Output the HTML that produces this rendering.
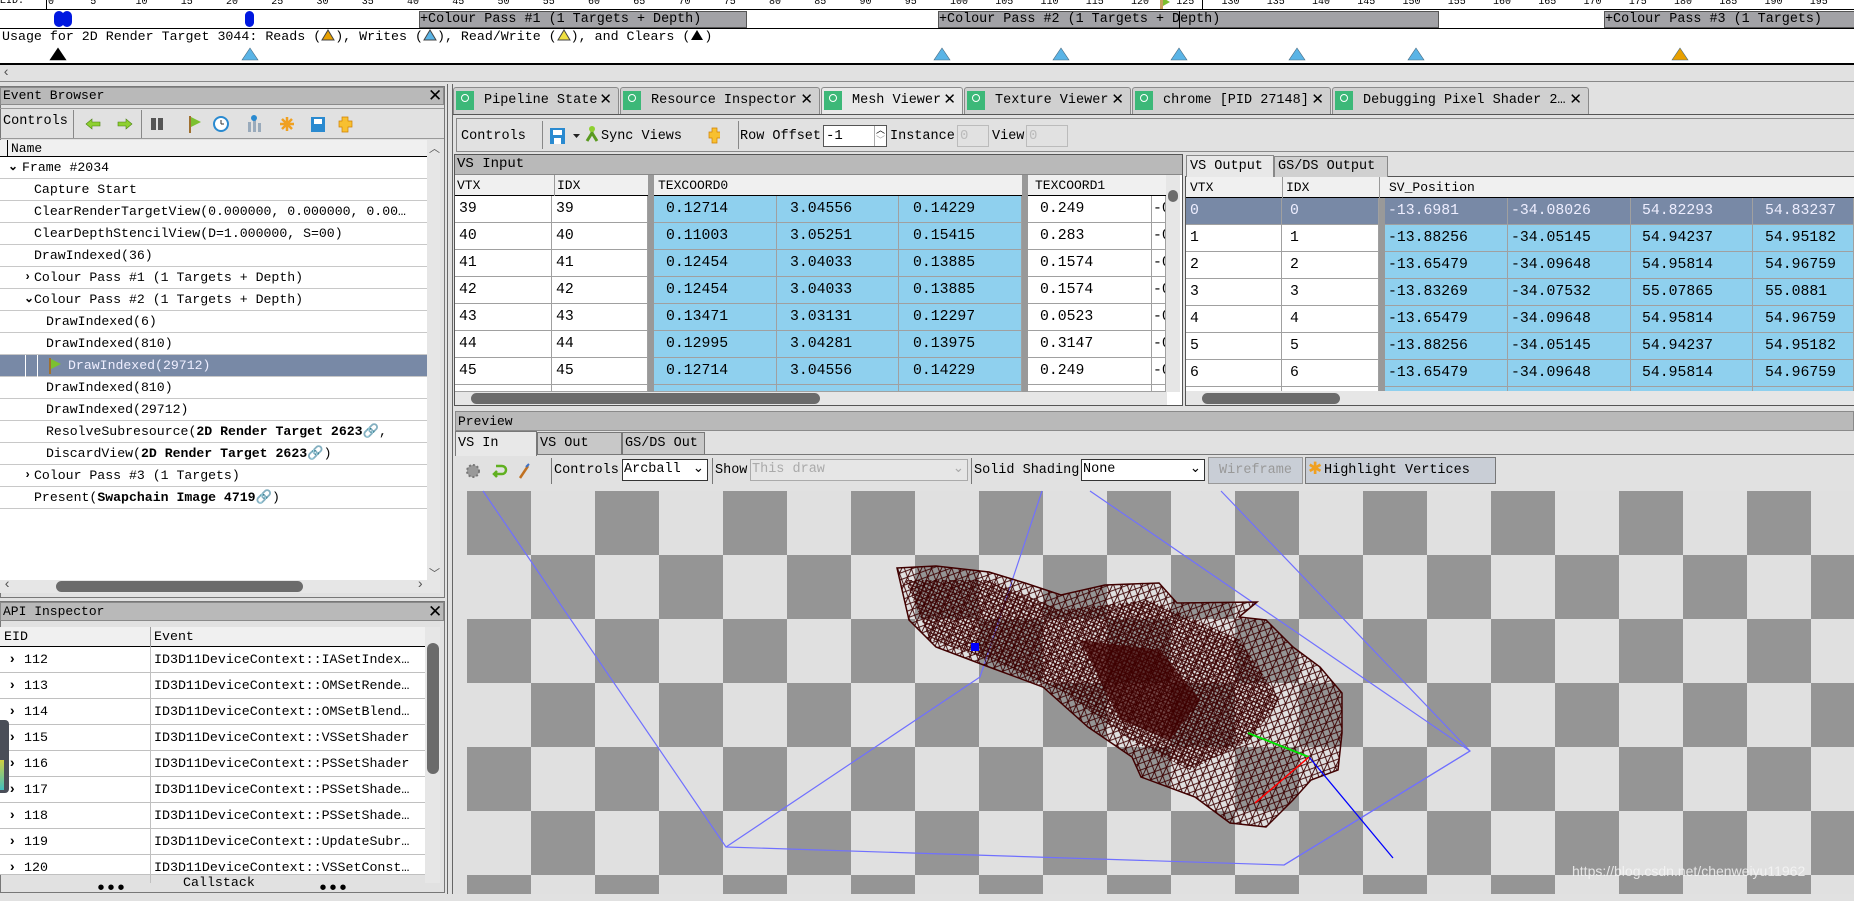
<!DOCTYPE html>
<html><head><meta charset="utf-8">
<style>
*{box-sizing:border-box;margin:0;padding:0}
body{width:1854px;height:894px;overflow:hidden;background:#e1e1e1;font-family:"Liberation Mono","Noto Sans CJK SC",monospace;font-size:13px;color:#000;position:relative}
.a{position:absolute;white-space:nowrap}
.hdr{position:absolute;background:#b9b9b9;border:1px solid #8a8a8a;font-size:13px;line-height:16px;padding-left:2px}
.tab{position:absolute;top:87px;height:27px;background:#d0d0d0;border:1px solid #8a8a8a;border-bottom:none;border-radius:3px 3px 0 0;font-size:13.5px;line-height:25px;padding-left:30px}
.tab .ic{position:absolute;left:2px;top:3px;width:18px;height:19px;background:#3cb878}
.tab .ic:after{content:"";position:absolute;left:5px;top:3px;width:6px;height:6px;border:1.5px solid #fff;border-radius:50%}
.tab .x{position:absolute;right:6px;top:0;font-size:15px}
.row{position:absolute;left:0;height:22px;border-bottom:1px solid #c8c8c8;width:427px;line-height:21px;font-size:13.2px;background:#fff}
.cell{position:absolute;height:27px;line-height:27px;font-size:14.8px;border-right:1px solid #a0a0a0;border-bottom:1px solid #a0a0a0;padding-left:4px}
.b{background:#8fd0ee}
.w{background:#fff}
.sel{background:#7889a6;color:#eef}
.api{position:absolute;left:0;height:26px;width:425px;border-bottom:1px solid #c0c0c0;background:#fff;font-size:13.3px;line-height:26px}
.sb{position:absolute;background:#e6e6e6}
.th{position:absolute;background:#6b6b6b;border-radius:6px}
</style></head><body>

<!-- timeline -->
<div class="a" style="left:0;top:0;width:1854px;height:64px;background:#fff"></div>
<div class="a" style="left:0;top:9px;width:1854px;height:1px;background:#000"></div>
<div class="a" style="left:0;top:28px;width:1854px;height:1px;background:#000"></div>
<div class="a" style="left:0;top:63px;width:1854px;height:2px;background:#000"></div>
<div class="a" style="left:0;top:-4px;font-size:10px;line-height:12px">EID:</div>
<div class="a" style="left:46px;top:0;width:1px;height:9px;background:#000"></div>
<div id="ruler"></div>
<div class="a" style="left:1160px;top:-2px;width:3px;height:11px;background:#c8a060"></div>
<div class="a" style="left:1163px;top:-2px;width:0;height:0;border-left:7px solid #7cc030;border-top:4px solid transparent;border-bottom:4px solid transparent"></div>
<div class="a" style="left:1202px;top:0;width:1px;height:9px;background:#000"></div>
<div class="a" style="left:54px;top:11px;width:10px;height:16px;background:#0018e0;border-radius:5px"></div>
<div class="a" style="left:62px;top:11px;width:10px;height:16px;background:#0018e0;border-radius:5px"></div>
<div class="a" style="left:245px;top:11px;width:9px;height:16px;background:#0018e0;border-radius:5px"></div>
<div class="a" style="left:419px;top:11px;width:328px;height:17px;background:#a2a2a6;border:1px solid #555;font-size:13.4px;line-height:15px">+Colour Pass #1 (1 Targets + Depth)</div>
<div class="a" style="left:938px;top:11px;width:501px;height:17px;background:#a2a2a6;border:1px solid #555;font-size:13.4px;line-height:15px">+Colour Pass #2 (1 Targets + Depth)</div>
<div class="a" style="left:1179px;top:11px;width:1px;height:17px;background:#000"></div>
<div class="a" style="left:1604px;top:11px;width:260px;height:17px;background:#a2a2a6;border:1px solid #555;font-size:13.4px;line-height:15px">+Colour Pass #3 (1 Targets)</div>
<div class="a" style="left:2px;top:29px;font-size:13.3px;line-height:16px">Usage for 2D Render Target 3044: Reads (<svg width="14" height="12" style="vertical-align:-1px"><path d="M7 1L13 11H1Z" fill="#e8a000" stroke="#444"/></svg>), Writes (<svg width="14" height="12" style="vertical-align:-1px"><path d="M7 1L13 11H1Z" fill="#5ab4e6" stroke="#444"/></svg>), Read/Write (<svg width="14" height="12" style="vertical-align:-1px"><path d="M7 1L13 11H1Z" fill="#f0e040" stroke="#444"/></svg>), and Clears (<svg width="14" height="12" style="vertical-align:-1px"><path d="M7 1L13 11H1Z" fill="#000"/></svg>)</div>
<svg class="a" style="left:0;top:46px" width="1854" height="16">
<g stroke="#4a6a80" stroke-width="0.6">
<path d="M58 2L66 14H50Z" fill="#000" stroke="#000"/>
<path d="M250 2L258 14H242Z" fill="#5ab4e6"/>
<path d="M942 2L950 14H934Z" fill="#5ab4e6"/>
<path d="M1061 2L1069 14H1053Z" fill="#5ab4e6"/>
<path d="M1179 2L1187 14H1171Z" fill="#5ab4e6"/>
<path d="M1297 2L1305 14H1289Z" fill="#5ab4e6"/>
<path d="M1416 2L1424 14H1408Z" fill="#5ab4e6"/>
<path d="M1680 2L1688 14H1672Z" fill="#e8a000"/>
</g></svg>
<div class="a" style="left:2px;top:65px;font-size:14px;color:#555">‹</div>
<div class="a" style="left:0;top:81px;width:1854px;height:1px;background:#888"></div>

<!-- Event browser -->
<div class="a" style="left:0;top:86px;width:445px;height:512px;border:1px solid #777;background:#e1e1e1"></div>
<div class="hdr" style="left:0;top:87px;width:444px;height:18px">Event Browser</div>
<div class="a" style="left:428px;top:86px;font-size:17px">✕</div>
<div class="a" style="left:0;top:108px;width:444px;height:31px;border-top:1px solid #999;border-bottom:1px solid #999"></div>
<div class="a" style="left:3px;top:114px;font-size:13.5px">Controls</div>
<div class="a" style="left:73px;top:110px;width:1px;height:28px;background:#888"></div>
<div class="a" style="left:141px;top:110px;width:1px;height:28px;background:#888"></div>
<svg class="a" style="left:84px;top:114px" width="270" height="20">
<path d="M2 10l6-5v3h8v4H8v3z" fill="#8ed030" stroke="#4a8010" stroke-width=".6"/>
<path d="M48 10l-6-5v3h-8v4h8v3z" fill="#8ed030" stroke="#4a8010" stroke-width=".6"/>
<rect x="67" y="4" width="5" height="12" fill="#555"/><rect x="74" y="4" width="5" height="12" fill="#555"/>
<path d="M106 2v17" stroke="#a07030" stroke-width="2"/><path d="M107 3l10 5-10 5z" fill="#7cc030"/>
<circle cx="137" cy="10" r="7" fill="#fff" stroke="#2a8ad0" stroke-width="2"/><path d="M137 10V6M137 10h3" stroke="#333"/>
<rect x="164" y="8" width="3" height="10" fill="#9ab"/><rect x="169" y="6" width="3" height="12" fill="#9ab"/><rect x="174" y="9" width="3" height="9" fill="#9ab"/><circle cx="170" cy="4" r="3" fill="#2a8ad0"/>
<path d="M203 3v14M196 10h14M198 5l10 10M208 5l-10 10" stroke="#f0a020" stroke-width="2.5"/>
<rect x="227" y="3" width="14" height="15" fill="#2a8ad0"/><rect x="230" y="5" width="8" height="5" fill="#fff"/>
<path d="M258 3h6v4h4v6h-4v5h-6v-5h-3V7h3z" fill="#f8c030" stroke="#d08000" stroke-width=".7"/>
</svg>
<div class="a" style="left:0;top:140px;width:427px;height:17px;background:#f0f0f0;border-bottom:1px solid #000"></div>
<div class="a" style="left:7px;top:140px;width:1px;height:17px;background:#000"></div>
<div class="a" style="left:11px;top:140px;font-size:13px;line-height:17px">Name</div>
<div id="tree"></div>
<div class="a" style="left:0;top:509px;width:427px;height:71px;background:#fff"></div>
<div class="sb" style="left:427px;top:140px;width:13px;height:440px"></div>
<div class="a" style="left:429px;top:140px;font-size:11px;color:#555">︿</div>
<div class="a" style="left:429px;top:565px;font-size:11px;color:#555">﹀</div>
<div class="sb" style="left:0;top:580px;width:440px;height:13px"></div>
<div class="th" style="left:56px;top:581px;width:247px;height:11px"></div>
<div class="a" style="left:3px;top:577px;font-size:14px;color:#555">‹</div>
<div class="a" style="left:416px;top:577px;font-size:14px;color:#555">›</div>

<!-- API inspector -->
<div class="a" style="left:0;top:601px;width:445px;height:292px;border:1px solid #777"></div>
<div class="hdr" style="left:0;top:602px;width:444px;height:19px;line-height:18px">API Inspector</div>
<div class="a" style="left:428px;top:602px;font-size:17px">✕</div>
<div class="a" style="left:0;top:627px;width:425px;height:20px;background:#f0f0f0;border-bottom:1px solid #000"></div>
<div class="a" style="left:4px;top:629px;font-size:13.3px">EID</div>
<div class="a" style="left:150px;top:627px;width:1px;height:20px;background:#999"></div>
<div class="a" style="left:154px;top:629px;font-size:13.3px">Event</div>
<div id="api"></div>
<div class="a" style="left:150px;top:647px;width:1px;height:236px;background:#c0c0c0"></div>
<div class="sb" style="left:425px;top:627px;width:15px;height:256px"></div>
<div class="th" style="left:427px;top:643px;width:12px;height:131px"></div>
<div class="a" style="left:0;top:720px;width:9px;height:73px;background:#4a4e58;border-radius:0 4px 4px 0"></div>
<div class="a" style="left:0;top:760px;width:4px;height:30px;background:linear-gradient(#d0d040,#40c0c0)"></div>
<div class="a" style="left:183px;top:876px;font-size:13.3px;line-height:14px">Callstack</div>
<div class="a" style="left:95px;top:880px;font-size:20px;line-height:20px;letter-spacing:-2px">•••</div>
<div class="a" style="left:317px;top:880px;font-size:20px;line-height:20px;letter-spacing:-2px">•••</div>
<div class="a" style="left:447px;top:84px;width:1px;height:810px;background:#666"></div>
<div class="a" style="left:452px;top:84px;width:1px;height:810px;background:#666"></div>

<!-- right tabs -->
<div class="tab" style="left:453px;width:166px">Pipeline State<span class="ic"></span><span class="x">✕</span></div>
<div class="tab" style="left:620px;width:200px">Resource Inspector<span class="ic"></span><span class="x">✕</span></div>
<div class="tab" style="left:821px;width:142px;background:#e8e8e8">Mesh Viewer<span class="ic"></span><span class="x">✕</span></div>
<div class="tab" style="left:964px;width:167px">Texture Viewer<span class="ic"></span><span class="x">✕</span></div>
<div class="tab" style="left:1132px;width:199px">chrome [PID 27148]<span class="ic"></span><span class="x">✕</span></div>
<div class="tab" style="left:1332px;width:257px">Debugging Pixel Shader 2…<span class="ic"></span><span class="x">✕</span></div>
<div class="a" style="left:453px;top:114px;width:1401px;height:1px;background:#555"></div>

<!-- mesh toolbar -->
<div class="a" style="left:456px;top:118px;width:1398px;height:34px;border:1px solid #888;border-right:none"></div>
<div class="a" style="left:461px;top:129px;font-size:13.5px">Controls</div>
<div class="a" style="left:542px;top:121px;width:1px;height:28px;background:#888"></div>
<svg class="a" style="left:550px;top:126px" width="170" height="22"><rect x="0" y="2" width="15" height="16" fill="#2a8ad0"/><rect x="3" y="4" width="9" height="5" fill="#fff"/><rect x="4" y="12" width="7" height="6" fill="#fff"/><path d="M23 8h7l-3.5 4z" fill="#222"/><path d="M42 3v4l-5 8M42 7l5 8" stroke="#5a9a20" stroke-width="3" fill="none"/><circle cx="42" cy="3" r="3" fill="#8ed030"/><path d="M162 2h5v4h4v6h-4v5h-5v-5h-3V6h3z" fill="#f8c030" stroke="#d08000" stroke-width=".7"/></svg>
<div class="a" style="left:601px;top:129px;font-size:13.5px">Sync Views</div>
<div class="a" style="left:738px;top:121px;width:1px;height:28px;background:#888"></div>
<div class="a" style="left:740px;top:129px;font-size:13.5px">Row Offset</div>
<div class="a" style="left:823px;top:125px;width:64px;height:22px;background:#fff;border:1px solid #555;font-size:14px;line-height:20px;padding-left:2px">-1</div>
<div class="a" style="left:874px;top:126px;width:12px;height:20px;border-left:1px solid #aaa;font-size:9px;line-height:10px;text-align:center">︿<br><span style="color:#aaa">﹀</span></div>
<div class="a" style="left:890px;top:129px;font-size:13.5px">Instance</div>
<div class="a" style="left:957px;top:125px;width:32px;height:22px;border:1px solid #bbb;color:#bbb;font-size:14px;line-height:20px;padding-left:2px">0</div>
<div class="a" style="left:992px;top:129px;font-size:13.5px">View</div>
<div class="a" style="left:1026px;top:125px;width:42px;height:22px;border:1px solid #bbb;color:#bbb;font-size:14px;line-height:20px;padding-left:2px">0</div>

<!-- VS Input -->
<div class="a" style="left:454px;top:154px;width:729px;height:252px;border:1px solid #555;background:#fff"></div>
<div class="hdr" style="left:455px;top:155px;width:727px;height:20px;border:none;border-bottom:1px solid #888;line-height:19px;font-size:14px">VS Input</div>
<div class="a" style="left:455px;top:175px;width:712px;height:21px;background:#f0f0f0;border-bottom:1px solid #000;font-size:13px;line-height:21px">
<span class="a" style="left:2px">VTX</span><span class="a" style="left:99px;top:0;width:1px;height:21px;background:#999"></span><span class="a" style="left:102px">IDX</span><span class="a" style="left:193px;top:0;width:6px;height:21px;background:#999"></span><span class="a" style="left:203px">TEXCOORD0</span><span class="a" style="left:567px;top:0;width:6px;height:21px;background:#999"></span><span class="a" style="left:580px">TEXCOORD1</span></div>
<div id="vsin"></div>
<div class="sb" style="left:1166px;top:175px;width:14px;height:217px"></div>
<div class="th" style="left:1168px;top:190px;width:10px;height:12px"></div>
<div class="sb" style="left:455px;top:392px;width:712px;height:13px"></div>
<div class="th" style="left:471px;top:393px;width:349px;height:11px"></div>

<!-- VS Output -->
<div class="a" style="left:1185px;top:176px;width:669px;height:230px;border:1px solid #555;background:#fff"></div>
<div class="a" style="left:1186px;top:155px;width:88px;height:22px;background:#e8e8e8;border:1px solid #888;border-bottom:none;font-size:13.5px;line-height:22px;padding-left:3px">VS Output</div>
<div class="a" style="left:1274px;top:156px;width:114px;height:21px;background:#d0d0d0;border:1px solid #888;border-bottom:none;font-size:13.5px;line-height:20px;padding-left:3px">GS/DS Output</div>
<div class="a" style="left:1186px;top:177px;width:668px;height:21px;background:#f0f0f0;border-bottom:1px solid #000;font-size:13px;line-height:21px">
<span class="a" style="left:4px">VTX</span><span class="a" style="left:96px;top:0;width:1px;height:21px;background:#999"></span><span class="a" style="left:100px">IDX</span><span class="a" style="left:193px;top:0;width:1px;height:21px;background:#999"></span><span class="a" style="left:203px">SV_Position</span></div>
<div id="vsout"></div>
<div class="sb" style="left:1186px;top:391px;width:668px;height:14px"></div>
<div class="th" style="left:1202px;top:393px;width:138px;height:11px"></div>

<!-- Preview -->
<div class="hdr" style="left:455px;top:411px;width:1399px;height:20px;line-height:19px">Preview</div>
<div class="a" style="left:455px;top:431px;width:82px;height:25px;background:#e8e8e8;border:1px solid #777;border-bottom:none;font-size:13.5px;line-height:24px;padding-left:2px">VS In</div>
<div class="a" style="left:537px;top:432px;width:85px;height:23px;background:#c8c8c8;border:1px solid #777;font-size:13.5px;line-height:22px;padding-left:2px">VS Out</div>
<div class="a" style="left:622px;top:432px;width:83px;height:23px;background:#c8c8c8;border:1px solid #777;font-size:13.5px;line-height:22px;padding-left:2px">GS/DS Out</div>
<div class="a" style="left:705px;top:454px;width:1149px;height:1px;background:#777"></div>
<svg class="a" style="left:463px;top:461px" width="80" height="20"><circle cx="10" cy="10" r="6" fill="#999" stroke="#777" stroke-width="2" stroke-dasharray="2 2"/><path d="M33 5h6a4 4 0 010 8h-8m3-3l-3 3 3 3" stroke="#60b020" stroke-width="2.5" fill="none"/><path d="M57 17l8-12" stroke="#c07020" stroke-width="2.5"/><path d="M63 6l3-3" stroke="#4070c0" stroke-width="2"/></svg>
<div class="a" style="left:551px;top:458px;width:1px;height:26px;background:#777"></div>
<div class="a" style="left:554px;top:463px;font-size:13.5px">Controls</div>
<div class="a" style="left:622px;top:459px;width:86px;height:22px;background:#fff;border:1px solid #333;font-size:13.5px;line-height:20px;padding-left:1px">Arcball<span class="a" style="right:3px;top:0">⌄</span></div>
<div class="a" style="left:712px;top:458px;width:1px;height:26px;background:#777"></div>
<div class="a" style="left:715px;top:463px;font-size:13.5px">Show</div>
<div class="a" style="left:750px;top:459px;width:218px;height:22px;background:#e6e6e6;border:1px solid #aaa;color:#aaa;font-size:13.5px;line-height:20px;padding-left:1px">This draw<span class="a" style="right:3px;top:0">⌄</span></div>
<div class="a" style="left:971px;top:458px;width:1px;height:26px;background:#777"></div>
<div class="a" style="left:974px;top:463px;font-size:13.5px">Solid Shading</div>
<div class="a" style="left:1081px;top:459px;width:124px;height:22px;background:#fff;border:1px solid #333;font-size:13.5px;line-height:20px;padding-left:1px">None<span class="a" style="right:3px;top:0">⌄</span></div>
<div class="a" style="left:1208px;top:457px;width:95px;height:27px;background:#c9ced6;border:1px solid #999;color:#999;font-size:13.5px;line-height:25px;text-align:center">Wireframe</div>
<div class="a" style="left:1305px;top:457px;width:191px;height:27px;background:#c9ced6;border:1px solid #777;font-size:13.5px;line-height:25px;padding-left:18px">Highlight Vertices<span class="a" style="left:2px;top:0;color:#f0a020;font-size:17px">✱</span></div>

<div class="a" style="left:455px;top:491px;width:1399px;height:403px;background:repeating-conic-gradient(#959595 0 25%,#e0e0e0 0 50%) -52px 0/128px 128px"></div>
<div class="a" style="left:455px;top:491px;width:12px;height:403px;background:#e0e0e0"></div>
<svg class="a" style="left:0;top:0" width="1854" height="894">
<defs><pattern id="hat" width="9" height="9" patternUnits="userSpaceOnUse" patternTransform="rotate(25)"><path d="M0 0L9 9M9 0L0 9M4.5 0V9" stroke="#3a0000" stroke-width=".9"/></pattern>
<pattern id="hat2" width="5" height="5" patternUnits="userSpaceOnUse" patternTransform="rotate(-20)"><path d="M0 0L5 5M5 0L0 5" stroke="#3a0000" stroke-width="1"/></pattern></defs>
<g stroke="#7070ff" stroke-width="1.2" fill="none">
<path d="M483 491L726 847L1284 865L1470 751L1221 491"/>
<path d="M1090 491L1470 751"/>
<path d="M1042 491L980 677L726 847"/>
<path d="M1284 865L1470 751"/>
</g>
<path d="M897 568L936 566L989 572L1025 583L1061 595L1105 585L1159 583L1177 603L1257 602L1239 617L1266 620L1293 647L1320 667L1342 693L1342 733L1338 770L1311 780L1293 800L1266 827L1230 823L1195 797L1141 777L1132 757L1088 727L1043 687L989 667L936 647L909 620Z" fill="url(#hat)" stroke="#400000" stroke-width="1.5"/>
<path d="M905 580L990 580L1060 610L1150 600L1240 640L1280 700L1250 740L1190 770L1130 740L1060 690L990 660L930 640Z" fill="url(#hat2)"/>
<path d="M1080 640L1160 650L1200 700L1170 740L1120 720Z" fill="#400000" opacity=".7"/>
<rect x="971" y="643" width="8" height="8" fill="#0000ff"/>
<path d="M1309 757L1393 858" stroke="#0000ff" stroke-width="1.3"/>
<path d="M1248 733L1309 757" stroke="#00e000" stroke-width="2"/>
<path d="M1309 757L1255 803" stroke="#ff0000" stroke-width="1.5"/>
<text x="1572" y="876" font-family="Liberation Sans,sans-serif" font-size="14" fill="#f4f4f4" fill-opacity=".85">https://blog.csdn.net/chenweiyu11962</text>
</svg>

<script>
(function(){
var r='';for(var n=0;n<=195;n+=5){var x=45+n*9.05;r+='<div class="a" style="left:'+(n==0?48:x)+'px;top:-3px;font-size:10px;line-height:12px">'+n+'</div>';}
document.getElementById('ruler').innerHTML=r;
var t=[[8,'v','Frame #2034',22],[34,'','Capture Start'],[34,'','ClearRenderTargetView(0.000000, 0.000000, 0.00…'],[34,'','ClearDepthStencilView(D=1.000000, S=00)'],[34,'','DrawIndexed(36)'],[24,'>','Colour Pass #1 (1 Targets + Depth)',34],[24,'v','Colour Pass #2 (1 Targets + Depth)',34],[46,'','DrawIndexed(6)'],[46,'','DrawIndexed(810)'],[68,'sel','DrawIndexed(29712)'],[46,'','DrawIndexed(810)'],[46,'','DrawIndexed(29712)'],[46,'','ResolveSubresource(<b>2D Render Target 2623</b>🔗,'],[46,'','DiscardView(<b>2D Render Target 2623</b>🔗)'],[24,'>','Colour Pass #3 (1 Targets)',34],[34,'','Present(<b>Swapchain Image 4719</b>🔗)']];
var h='';for(var i=0;i<t.length;i++){var y=157+i*22,e=t[i],cls='row'+(e[1]=='sel'?' sel':'');h+='<div class="'+cls+'" style="top:'+y+'px">';
if(e[1]=='v'||e[1]=='>'){h+='<span class="a" style="left:'+e[0]+'px;font-size:12px;font-weight:bold">'+(e[1]=='v'?'⌄':'›')+'</span>';h+='<span class="a" style="left:'+e[3]+'px">'+e[2]+'</span>';}
else if(e[1]=='sel'){h+='<span class="a" style="left:25px;top:0;width:1px;height:22px;background:#fff"></span><span class="a" style="left:37px;top:0;width:1px;height:22px;background:#fff"></span><span class="a" style="left:49px;top:3px;width:2px;height:16px;background:#a07030"></span><span class="a" style="left:51px;top:4px;width:0;height:0;border-left:10px solid #7cc030;border-top:5px solid transparent;border-bottom:5px solid transparent"></span><span class="a" style="left:'+e[0]+'px">'+e[2]+'</span>';}
else h+='<span class="a" style="left:'+e[0]+'px">'+e[2]+'</span>';
h+='</div>';}
document.getElementById('tree').innerHTML=h;
var ap=['IASetIndex…','OMSetRende…','OMSetBlend…','VSSetShader','PSSetShader','PSSetShade…','PSSetShade…','UpdateSubr…','VSSetConst…'];
h='';for(i=0;i<9;i++){var y=647+i*26;h+='<div class="api" style="top:'+y+'px;'+(i==8?'height:20px;overflow:hidden':'')+'"><span class="a" style="left:8px;font-weight:bold;font-size:14px">›</span><span class="a" style="left:24px">'+(112+i)+'</span><span class="a" style="left:154px">ID3D11DeviceContext::'+ap[i]+'</span></div>';}
document.getElementById('api').innerHTML=h;
var d=[[39,'0.12714','3.04556','0.14229','0.249'],[40,'0.11003','3.05251','0.15415','0.283'],[41,'0.12454','3.04033','0.13885','0.1574'],[42,'0.12454','3.04033','0.13885','0.1574'],[43,'0.13471','3.03131','0.12297','0.0523'],[44,'0.12995','3.04281','0.13975','0.3147'],[45,'0.12714','3.04556','0.14229','0.249'],['','','','','']];
h='';for(i=0;i<8;i++){var y=196+i*27,hh=i==7?7:27,s='top:'+y+'px;height:'+hh+'px;';
h+='<div class="cell w" style="left:455px;width:97px;'+s+'">'+d[i][0]+'</div><div class="cell w" style="left:552px;width:96px;'+s+'">'+d[i][0]+'</div><div class="a" style="left:648px;width:6px;background:#999;'+s+'"></div>';
h+='<div class="cell b" style="left:654px;width:123px;padding-left:12px;'+s+'">'+d[i][1]+'</div><div class="cell b" style="left:777px;width:122px;padding-left:13px;'+s+'">'+d[i][2]+'</div><div class="cell b" style="left:899px;width:123px;padding-left:14px;'+s+'">'+d[i][3]+'</div><div class="a" style="left:1022px;width:6px;background:#999;'+s+'"></div>';
h+='<div class="cell w" style="left:1028px;width:124px;padding-left:12px;'+s+'">'+d[i][4]+'</div><div class="cell w" style="left:1152px;width:14px;padding-left:1px;overflow:hidden;'+s+'">'+(i<7?'-0':'')+'</div>';}
document.getElementById('vsin').innerHTML=h;
var o=[['-13.6981','-34.08026','54.82293','54.83237'],['-13.88256','-34.05145','54.94237','54.95182'],['-13.65479','-34.09648','54.95814','54.96759'],['-13.83269','-34.07532','55.07865','55.0881'],['-13.65479','-34.09648','54.95814','54.96759'],['-13.88256','-34.05145','54.94237','54.95182'],['-13.65479','-34.09648','54.95814','54.96759'],['','','','']];
h='';for(i=0;i<8;i++){var y=198+i*27,hh=i==7?6:27,s='top:'+y+'px;height:'+hh+'px;',c0=i==0?'sel':'w',c1=i==0?'sel':'b',v=i<7?i:'';
h+='<div class="cell '+c0+'" style="left:1186px;width:96px;'+s+'">'+v+'</div><div class="cell '+c0+'" style="left:1282px;width:97px;padding-left:8px;'+s+'">'+v+'</div><div class="a" style="left:1379px;width:6px;background:#999;'+s+'"></div>';
var xs=[1385,1508,1631,1753],ws=[123,123,122,101],pl=[3,3,11,12];
for(var k=0;k<4;k++)h+='<div class="cell '+c1+'" style="left:'+xs[k]+'px;width:'+ws[k]+'px;padding-left:'+pl[k]+'px;'+s+'">'+o[i][k]+'</div>';}
document.getElementById('vsout').innerHTML=h;
})();
</script>
</body></html>
